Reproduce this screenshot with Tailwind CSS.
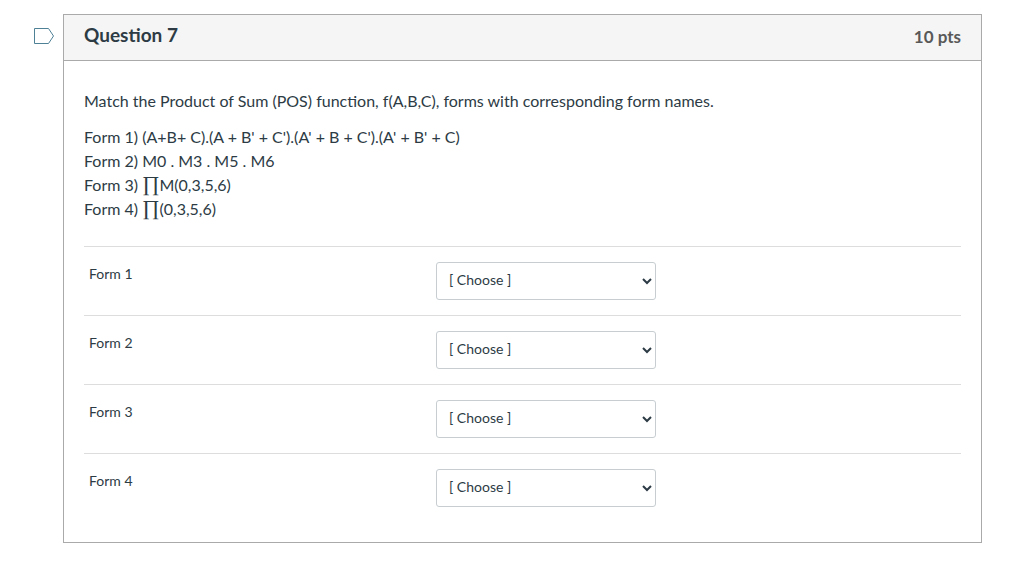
<!DOCTYPE html>
<html lang="en">

<head>
  <meta charset="UTF-8" />
  <meta name="viewport" content="width=device-width, initial-scale=1.0" />
  <title>Question 7</title>
  <script src="https://cdn.jsdelivr.net/npm/@tailwindcss/browser@4"></script>
</head>

<body class="bg-white pt-[14px] pr-[54px] pb-6 pl-[34px] font-[Lato,sans-serif] text-base text-[#2d3b45]">
  <div class="flex items-start">
    <!-- Flag -->
    <button type="button" aria-label="Flag question" class="mt-[14px] w-[29px] shrink-0">
      <svg width="20" height="16" viewBox="0 0 20 16" fill="none" stroke="#4f8196">
        <path d="M.5.5h14l5 7.5-5 7.5H.5z" />
      </svg>
    </button>

    <section class="grow border border-[#aaaaaa]">
      <header class="flex items-center justify-between border-b border-[#aaaaaa] bg-[#f5f5f5] px-5 pt-2 pb-[9px]">
        <h2 class="pb-1 text-[19px] leading-6 font-bold">Question 7</h2>
        <span class="text-[17px] leading-6 font-bold text-[#595959]">10 pts</span>
      </header>

      <div class="px-5 pt-7 pb-5">
        <p class="mb-3 leading-6">Match the Product of Sum (POS) function, f(A,B,C), forms with corresponding form names.</p>
        <p class="leading-6">
          Form 1) (A+B+ C).(A + B' + C').(A' + B + C').(A' + B' + C)<br />
          Form 2) M0 . M3 . M5 . M6<br />
          Form 3) <span class="font-['Liberation_Serif',serif] text-[21px] leading-none">∏</span>M(0,3,5,6)<br />
          Form 4) <span class="font-['Liberation_Serif',serif] text-[21px] leading-none">∏</span>(0,3,5,6)
        </p>

        <!-- Matching answers -->
        <div class="mt-[25px] text-sm">
          <div class="flex border-t border-[#dddddd] py-[15px] pl-[5px]">
            <label for="form1" class="w-[347px] pt-[2px]">Form 1</label>
            <select id="form1" class="h-[38px] w-[220px] rounded-[3px] border border-[#c7cdd1] bg-white px-2 pb-[3px]">
              <option>[ Choose ]</option>
            </select>
          </div>
          <div class="flex border-t border-[#dddddd] py-[15px] pl-[5px]">
            <label for="form2" class="w-[347px] pt-[2px]">Form 2</label>
            <select id="form2" class="h-[38px] w-[220px] rounded-[3px] border border-[#c7cdd1] bg-white px-2 pb-[3px]">
              <option>[ Choose ]</option>
            </select>
          </div>
          <div class="flex border-t border-[#dddddd] py-[15px] pl-[5px]">
            <label for="form3" class="w-[347px] pt-[2px]">Form 3</label>
            <select id="form3" class="h-[38px] w-[220px] rounded-[3px] border border-[#c7cdd1] bg-white px-2 pb-[3px]">
              <option>[ Choose ]</option>
            </select>
          </div>
          <div class="flex border-t border-[#dddddd] py-[15px] pl-[5px]">
            <label for="form4" class="w-[347px] pt-[2px]">Form 4</label>
            <select id="form4" class="h-[38px] w-[220px] rounded-[3px] border border-[#c7cdd1] bg-white px-2 pb-[3px]">
              <option>[ Choose ]</option>
            </select>
          </div>
        </div>
      </div>
    </section>
  </div>
</body>

</html>
